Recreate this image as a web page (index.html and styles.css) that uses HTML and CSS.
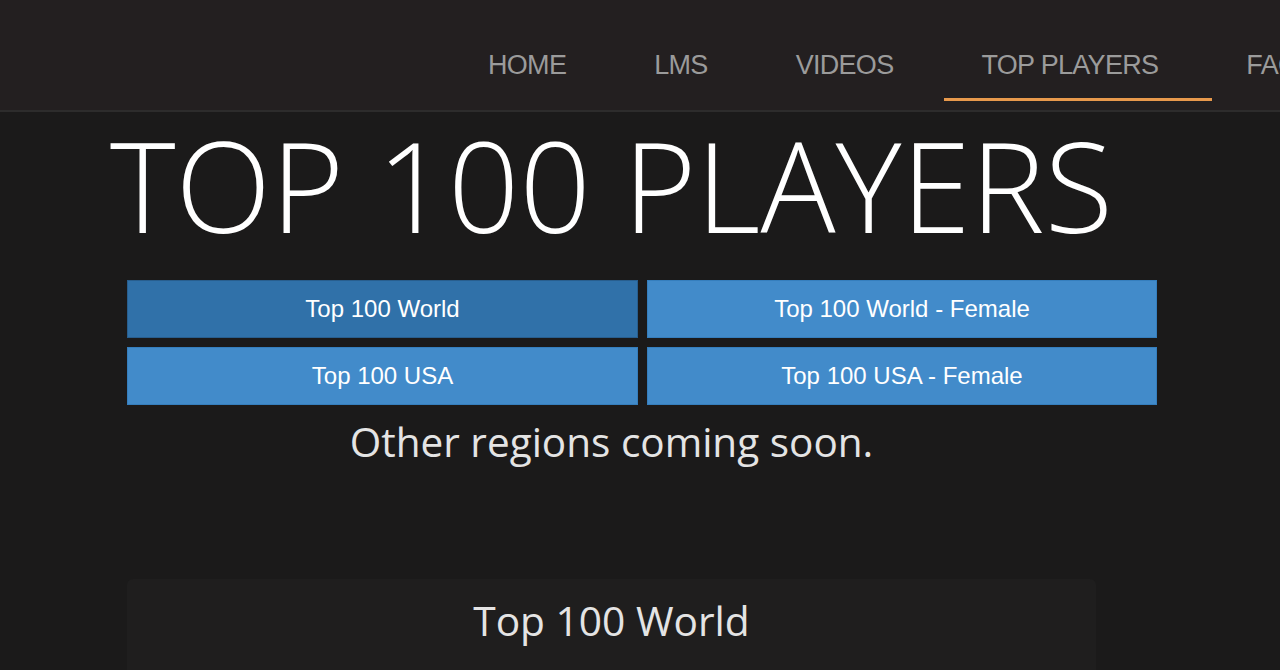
FILE: index.html
```html
<!DOCTYPE html>
<html lang="en">
<head>
  <meta charset="UTF-8" />
  <meta name="viewport" content="width=device-width, initial-scale=1" />
  <title>Top 100 Players</title>
  <link rel="stylesheet" href="styles.css">
</head>
<body>
  <header class="navbar">
    <nav class="menu">
      <a href="#">HOME</a>
      <a href="#">LMS</a>
      <a href="#">VIDEOS</a>
      <a href="#" class="activo">TOP PLAYERS</a>
      <a href="#">FAQ</a>
    </nav>
  </header>

  <main class="contenido">
    <h1>TOP 100 PLAYERS</h1>
    <div class="botones">
      <a href="#" class="boton activo">Top 100 World</a>
      <a href="#" class="boton">Top 100 World - Female</a>
      <a href="#" class="boton">Top 100 USA</a>
      <a href="#" class="boton">Top 100 USA - Female</a>
    </div>
    <p class="aviso">Other regions coming soon.</p>

    <section class="tarjeta">
      <h2>Top 100 World</h2>
    </section>
  </main>
</body>
</html>
```

FILE: styles.css
```css
* {
  margin: 0;
  padding: 0;
  box-sizing: border-box;
}
body {
  background-color: #1b1a1a;
  font-family: "Open Sans", sans-serif;
  color: #e6e6e6;
  overflow: hidden;
}
.navbar {
  height: 112px;
  background-color: #231f20;
  border-bottom: 2px solid #2d2c2c;
}
.menu {
  display: flex;
  height: 110px;
  padding-left: 444px;
  padding-top: 20px;
  white-space: nowrap;
  overflow: hidden;
}
.menu a {
  position: relative;
  display: flex;
  align-items: center;
  padding: 0 44px;
  font-family: "Liberation Sans", Arial, sans-serif;
  font-size: 27px;
  letter-spacing: -0.7px;
  color: #9b9b9b;
  text-decoration: none;
}
.menu a.activo::after {
  content: "";
  position: absolute;
  left: 7px;
  right: -10px;
  bottom: 9px;
  height: 3px;
  background-color: #e8994c;
}
.contenido {
  margin-left: 127px;
  width: 969px;
}
h1 {
  margin: 10px -40px 0;
  font-size: 125px;
  line-height: 125px;
  font-weight: 300;
  color: #fff;
  text-align: center;
  white-space: nowrap;
}
.botones {
  display: grid;
  grid-template-columns: 511px 510px;
  grid-auto-rows: 58px;
  gap: 9px;
  margin-top: 33px;
  width: 1030px;
}
.boton {
  display: flex;
  justify-content: center;
  align-items: center;
  background-color: #428bca;
  border: 1px solid #357ebd;
  font-family: "Liberation Sans", Arial, sans-serif;
  font-size: 24px;
  color: #fff;
  text-decoration: none;
}
.boton.activo {
  background-color: #3071a9;
  border-color: #285e8e;
}
.aviso {
  margin-top: 13px;
  font-size: 40.5px;
  line-height: 48px;
  text-align: center;
  color: #e4e4e4;
}
.tarjeta {
  margin-top: 113px;
  height: 200px;
  background-color: #1f1e1e;
  border-radius: 6px;
  padding-top: 17px;
}
.tarjeta h2 {
  font-size: 40.7px;
  font-weight: 400;
  line-height: 48px;
  text-align: center;
  color: #e4e4e4;
}
```
